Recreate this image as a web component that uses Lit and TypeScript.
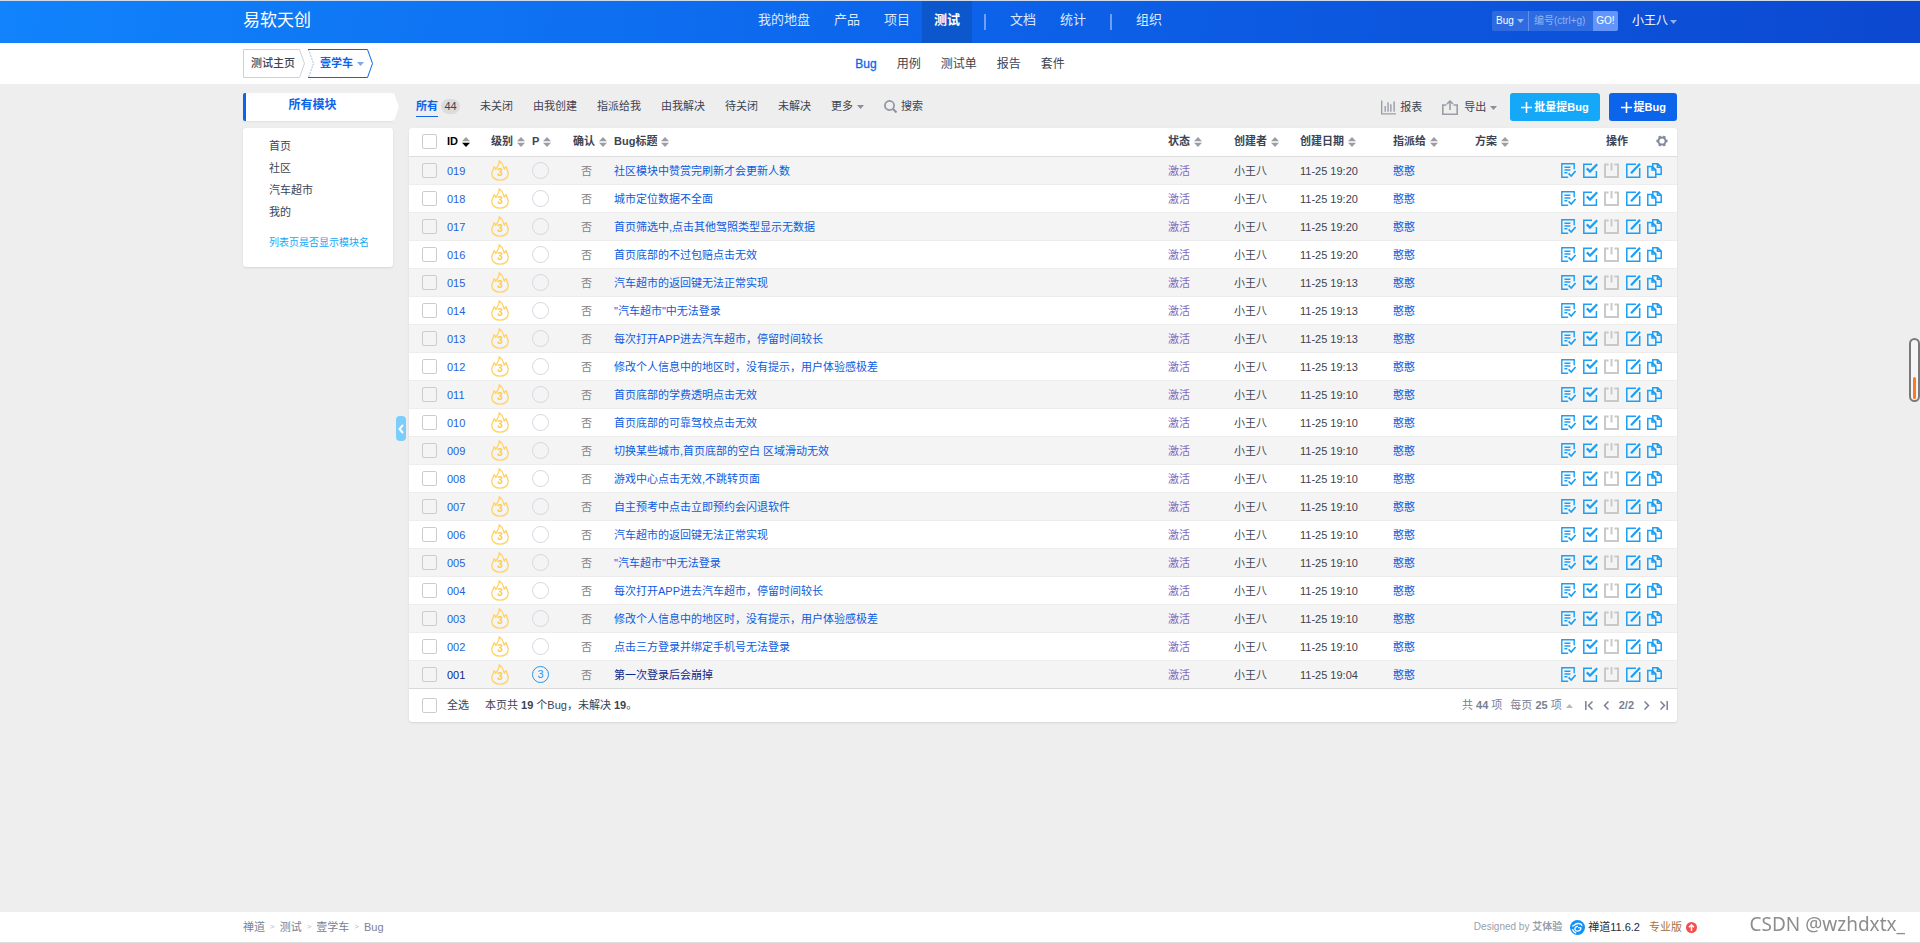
import { LitElement, html, css, svg } from "lit";
import { customElement } from "lit/decorators.js";
import { classMap } from "lit/directives/class-map.js";

interface Bug {
  id: string;
  title: string;
  time: string;
  priority?: string;
}

const bugs: Bug[] = [
  { id: "019", title: "社区模块中赞赏完刷新才会更新人数", time: "11-25 19:20" },
  { id: "018", title: "城市定位数据不全面", time: "11-25 19:20" },
  { id: "017", title: "首页筛选中,点击其他驾照类型显示无数据", time: "11-25 19:20" },
  { id: "016", title: "首页底部的不过包赔点击无效", time: "11-25 19:20" },
  { id: "015", title: "汽车超市的返回键无法正常实现", time: "11-25 19:13" },
  { id: "014", title: "\"汽车超市\"中无法登录", time: "11-25 19:13" },
  { id: "013", title: "每次打开APP进去汽车超市，停留时间较长", time: "11-25 19:13" },
  { id: "012", title: "修改个人信息中的地区时，没有提示，用户体验感极差", time: "11-25 19:13" },
  { id: "011", title: "首页底部的学费透明点击无效", time: "11-25 19:10" },
  { id: "010", title: "首页底部的可靠驾校点击无效", time: "11-25 19:10" },
  { id: "009", title: "切换某些城市,首页底部的空白 区域滑动无效", time: "11-25 19:10" },
  { id: "008", title: "游戏中心点击无效,不跳转页面", time: "11-25 19:10" },
  { id: "007", title: "自主预考中点击立即预约会闪退软件", time: "11-25 19:10" },
  { id: "006", title: "汽车超市的返回键无法正常实现", time: "11-25 19:10" },
  { id: "005", title: "\"汽车超市\"中无法登录", time: "11-25 19:10" },
  { id: "004", title: "每次打开APP进去汽车超市，停留时间较长", time: "11-25 19:10" },
  { id: "003", title: "修改个人信息中的地区时，没有提示，用户体验感极差", time: "11-25 19:10" },
  { id: "002", title: "点击三方登录并绑定手机号无法登录", time: "11-25 19:10" },
  { id: "001", title: "第一次登录后会崩掉", time: "11-25 19:04", priority: "3" },
];

const columns = ["级别", "P", "确认", "Bug标题", "状态", "创建者", "创建日期", "指派给", "方案"];

const sortMark = (down = false) => html`<svg class="sort" width="8" height="10" viewBox="0 0 8 10" aria-hidden="true">
    <path d="M4 0 8 4.300H0z" fill="#9a9da6" />
    <path d="M4 10 8 5.700H0z" fill=${down ? "#000" : "#9a9da6"} />
  </svg>`;

const caret = (up = false) => html`<svg class="caret" width="7" height="4" viewBox="0 0 7 4" aria-hidden="true">
    <path d=${up ? "M0 4h7L3.5 0z" : "M0 0h7L3.5 4z"} fill="currentColor" />
  </svg>`;

const icon = (label: string, body: unknown, off = false) => html`
  <button class=${classMap({ act: true, off })} title=${label} aria-label=${label} ?disabled=${off}>
    <svg width="15" height="15" viewBox="0 0 15 15" fill="none" stroke="currentColor" stroke-width="1.5">${body}</svg>
  </button>`;

const actionIcons = () => [
  icon("确认", svg`<path d="M13.2 6.2V.8H.8v13.4h6.4M3.4 4.2h6M3.4 7h6M3.4 9.8h3" stroke-width="1.4" /><path d="m7.600 10.400 2.600 2.600L14.600 8" stroke-width="1.700" />`),
  icon("解决", svg`<path d="M9 1.3H.8v12.9h12.6V8" /><path d="M3.800 5.4 7 8.6 14.200 1.2" stroke-width="2.200" />`),
  icon("关闭", svg`<path d="M4.6 1.500H1v12.500h13V1.500h-3.6M7.5 0v7.6" stroke-width="2" />`, true),
  icon("编辑", svg`<path d="M10 1.3H.8v12.9h12.9V5" /><path d="M5 10.2 14 .8" stroke-width="2.2" />`),
  icon("复制", svg`<path d="M.8 3.6h4.6l3.4 3.2v7.4h-8zM5 3.6V7h3.8" /><path d="M5.8 3.4V.8h5l3.4 3.2v7.2H9M10.4.8v3.4h3.8" />`),
];

const flame = html`
  <svg class="flame" width="18" height="21" viewBox="0 0 18 21" role="img" aria-label="级别 3">
    <path
      d="M8.200.8C8.400 4 7.400 5.400 6 7.400 5.600 8.200 5 8.800 4.800 9.400 4.400 8.400 4 7.400 3 6.600 3.200 9 .8 10.200.8 13.400.8 17.600 4.400 20.200 9 20.200s8.200-2.600 8.200-6.800c0-2.400-1.600-3.800-2-6.800-1 .6-1.600 1.400-1.800 2.600-.8-1-1-1.800-1.200-3C11.800 4.400 10.400 2.400 8.200.8z"
      fill="none" stroke="#ffd166" stroke-width="1.300" stroke-linejoin="round" />
    <text x="9" y="16" text-anchor="middle" font-size="10" font-weight="700" fill="#fcc94a">3</text>
  </svg>`;

@customElement("app-root")
export class AppRoot extends LitElement {
  static styles = css`
    :host {
      display: flex;
      flex-direction: column;
      min-height: 100vh;
      background: #eee;
      color: #3c4353;
      font: 11px/16px "Liberation Sans", "Noto Sans CJK SC", sans-serif;
    }
    * { box-sizing: border-box; }
    a { color: inherit; text-decoration: none; white-space: nowrap; }
    button, input, select { font: inherit; color: inherit; }
    button { background: none; border: 0; padding: 0; cursor: pointer; white-space: nowrap; }
    svg { flex: none; }
    .wrap {
      width: 100%;
      max-width: 1474px;
      margin: 0 auto;
      padding: 0 20px;
    }
    .caret { margin-left: 4px; vertical-align: middle; opacity: .55; }

    .top { border-top: 1px solid #cfdbe8; background: linear-gradient(100deg, #1183fb 0%, #0c63ea 50%, #0c48d0 100%); color: #fff; }
    .top .wrap, .sub .wrap { display: grid; grid-template-columns: 1fr auto 1fr; align-items: center; }
    .top .wrap { height: 42px; }
    .brand { font-size: 17px; line-height: 24px; margin: 0; font-weight: 400; padding-bottom: 2px; }
    .mainnav { display: flex; align-items: center; font-size: 13px; }
    .mainnav a { padding: 0 12px 4px; line-height: 38px; color: #dce9ff; }
    .mainnav a.on { background: #0c57cc; color: #fff; font-weight: 700; }
    .bar { width: 2px; height: 16px; margin: 0 12px; background: #6fa0f4; }
    .user { display: flex; justify-content: flex-end; align-items: center; padding-bottom: 2px; }
    .quick { display: flex; align-items: stretch; height: 20px; border-radius: 2px; overflow: hidden; font-size: 10px; background: #2e6be0; }
    .pick { display: flex; align-items: center; padding-right: 4px; border-right: 1px solid #5f90ee; }
    .pick select { appearance: none; background: none; border: 0; padding: 0 0 0 4px; width: 25px; height: 20px; line-height: 20px; outline: 0; }
    .pick .caret { margin-left: 0; }
    .quick input { width: 64px; border: 0; background: none; padding: 0 5px; outline: 0; }
    .quick input::placeholder { color: #8fb3f4; opacity: 1; }
    .go { width: 25px; background: #6495fb; color: #fff; }
    .me { font-size: 12px; margin-left: 14px; }
    .me .caret { margin-left: 2px; }

    .sub { background: #fff; }
    .sub .wrap { height: 41px; }
    .path { display: flex; gap: 2px; }
    .crumb { position: relative; height: 29px; line-height: 28px; padding: 0 11px 0 8px; font-weight: 500; }
    .crumb svg.edge { position: absolute; left: 0; top: 0; }
    .crumb.current { color: #0c64eb; font-weight: 700; padding: 0 11px 0 12px; }
    .subnav { display: flex; gap: 20px; font-size: 12px; }
    .subnav .on { color: #0c64eb; -webkit-text-stroke: .3px #0c64eb; }

    .main { flex: 1; padding-top: 9px; }
    .main .wrap { display: grid; grid-template-columns: 150px minmax(0, 1fr); column-gap: 16px; }
    .side { position: relative; }
    .sidehead { position: relative; height: 28px; margin: 0 0 7px; background: #fff; border-left: 3px solid #0c64eb; border-radius: 2px; font-size: 12px; line-height: 25px; font-weight: 700; color: #0c64eb; text-align: center; padding-right: 14px; box-shadow: 0 1px 1px #e0e0e0; }
    .sidehead svg { position: absolute; left: 147px; top: 0; }
    .tree { background: #fff; border-radius: 3px; padding: 7px 26px 14px; box-shadow: 0 1px 2px #d5d5d5; }
    .tree ul { list-style: none; margin: 0; padding: 0; }
    .tree li { line-height: 22px; }
    .tree .show { display: block; margin-top: 10px; font-size: 10px; line-height: 20px; color: #16a8f8; }
    .fold { position: absolute; left: 153px; top: 323px; width: 10px; height: 25px; border-radius: 4px; background: #7bcdfb; display: grid; place-items: center; }

    .tools { display: flex; align-items: center; height: 28px; margin-bottom: 7px; padding-left: 7px; }
    .filters { display: flex; align-items: center; gap: 20px; flex: 1; padding-bottom: 2px; }
    .filters .all { display: flex; align-items: center; gap: 3px; color: #0c64eb; font-weight: 700; }
    .filters .all span { line-height: 20px; border-bottom: 1px solid #0c64eb; }
    .filters .all .badge { background: #dcdcdc; color: #3c4353; border-radius: 8px; width: 19px; line-height: 15px; font-weight: 400; text-align: center; border: 0; }
    .withicon { display: flex; align-items: center; gap: 4px; }
    .right { display: flex; align-items: center; }
    .right .export { gap: 6px; margin: 0 13px 0 20px; }
    .primary { display: flex; align-items: center; gap: 2px; height: 28px; border-radius: 3px; color: #fff; font-weight: 700; background: #0c64eb; padding: 0 11px 0 12px; }
    .batch { background: #16a8f8; margin-right: 9px; padding: 0 11px; }

    .card { background: #fff; border-radius: 3px; box-shadow: 0 1px 2px #d5d5d5; }
    table { width: 100%; table-layout: fixed; border-collapse: separate; border-spacing: 0; }
    th, td { padding: 0; text-align: left; white-space: nowrap; overflow: hidden; }
    th { height: 29px; border-bottom: 1px solid #ddd; line-height: 24px; padding-bottom: 2px; font-weight: 700; }
    td { height: 28px; border-bottom: 1px solid #ededed; line-height: 26px; }
    tbody tr:nth-child(odd) { background: #f4f4f4; }
    tbody tr:last-child td { border-color: #d8d8d8; }
    .c-id { width: 82px; } .c-s { width: 41px; } .c-status { width: 66px; }
    .c-date { width: 93px; } .c-assigned { width: 82px; } .c-plan { width: 86px; } .c-act { width: 116px; }
    .pickrow { display: flex; align-items: center; gap: 10px; padding-left: 13px; }
    .tick { appearance: none; flex: none; margin: 0; width: 15px; height: 15px; border: 1px solid #ccc; border-radius: 2px; background: transparent; }
    .pickrow.idhead { color: #000; }
    .sort { margin-left: 4px; vertical-align: middle; }
    td a { color: #0c5be0; }
    td a.num { color: #2462dc; }
    tr.seen a.seenable { color: #0c2a8c; }
    .flame, .pri { display: block; }
    .pri { width: 17px; height: 17px; border: 1px solid #d5d8e2; border-radius: 50%; line-height: 15px; text-align: center; }
    .pri.set { border-color: #2196f3; color: #2196f3; }
    .conf { padding-left: 8px; color: #838383; }
    .status { color: #8666b8; }
    .acts { display: flex; justify-content: space-between; padding: 0 15px 1px 0; }
    .act { color: #1a9ff7; width: 15px; height: 15px; display: block; }
    .act.off { color: #c9c9c9; cursor: default; }
    .act svg { display: block; }
    .acthead { display: flex; justify-content: flex-end; align-items: center; gap: 28px; padding-right: 9px; }
    .acthead button { display: grid; color: #838a9d; }
    .foot { display: flex; align-items: center; height: 33px; padding: 0 9px 1px 13px; }
    .foot label { display: flex; align-items: center; gap: 10px; margin-right: 16px; }
    .foot p { margin: 0; flex: 1; }
    .pager { display: flex; align-items: center; color: #7a8093; }
    .pager .per { margin: 0 12px 0 8px; }
    .pager .steps { display: flex; align-items: center; gap: 10px; }
    .pager .steps button { display: grid; }

    .bottom { background: #fff; border-bottom: 1px solid #ddd; color: #7a8193; }
    .bottom .wrap { display: flex; align-items: center; justify-content: space-between; height: 30px; padding-right: 0; }
    .trail { display: flex; gap: 5px; }
    .trail i { font-style: normal; font-size: 8px; color: #b8bcc8; }
    .credit { display: flex; align-items: center; }
    .by { font-size: 10px; color: #9a9fac; margin-right: 8px; }
    .ver { color: #222a40; margin: 0 9px 0 3px; }
    .pro { color: #a8703f; margin-right: 4px; }
    .mark { position: fixed; right: 15px; bottom: 6px; font: 19px/26px "Noto Sans", sans-serif; color: #8d8d8d; }
    .gauge { position: fixed; right: 0; top: 338px; width: 11px; height: 64px; border: 2px solid #7a7a7a; border-radius: 6px; background: #f6f6f6; display: flex; align-items: flex-end; justify-content: center; padding-bottom: 1px; }
    .gauge span { width: 3px; height: 22px; border-radius: 2px; background: #fb7a22; }
  `;

  private renderTop() {
    return html`
      <header class="top">
        <div class="wrap">
          <h1 class="brand">易软天创</h1>
          <nav class="mainnav" aria-label="主导航">
            <a href="#">我的地盘</a><a href="#">产品</a><a href="#">项目</a><a href="#" class="on">测试</a>
            <span class="bar"></span>
            <a href="#">文档</a><a href="#">统计</a>
            <span class="bar"></span>
            <a href="#">组织</a>
          </nav>
          <div class="user">
            <form class="quick" @submit=${(e: Event) => e.preventDefault()}>
              <span class="pick"><select aria-label="类型"><option>Bug</option></select>${caret()}</span>
              <input type="text" aria-label="编号" placeholder="编号(ctrl+g)" />
              <button class="go">GO!</button>
            </form>
            <a class="me" href="#">小王八${caret()}</a>
          </div>
        </div>
      </header>
      <div class="sub">
        <div class="wrap">
          <div class="path">
            <a class="crumb" href="#">
              <svg class="edge" width="63" height="29" viewBox="0 0 63 29" fill="none" stroke="#cbd0db"><path d="M.5.5h56l5 14-5 14H.5z" /></svg>测试主页
            </a>
            <a class="crumb current" href="#">
              <svg class="edge" width="66" height="29" viewBox="0 0 66 29" fill="none" stroke="#0c64eb">
                <path d="M0 .5h59.500l5 14-5 14H0" /><path d="M.5.5l5 14-5 14" stroke-dasharray="2 1" opacity=".4" />
              </svg>壹学车${caret()}
            </a>
          </div>
          <nav class="subnav" aria-label="测试">
            <a href="#" class="on">Bug</a><a href="#">用例</a><a href="#">测试单</a><a href="#">报告</a><a href="#">套件</a>
          </nav>
        </div>
      </div>`;
  }

  private renderSide() {
    return html`
      <aside class="side">
        <h2 class="sidehead">所有模块<svg width="6" height="28" viewBox="0 0 6 28" aria-hidden="true"><path d="M0 0h1l5 14-5 14H0z" fill="#fff" /></svg></h2>
        <div class="tree">
          <ul>
            ${["首页", "社区", "汽车超市", "我的"].map((m) => html`<li><a href="#">${m}</a></li>`)}
          </ul>
          <a class="show" href="#">列表页是否显示模块名</a>
        </div>
        <button class="fold" aria-label="收起">
          <svg width="6" height="10" viewBox="0 0 6 10" fill="none" stroke="#fff" stroke-width="2"><path d="M5 1 1.500 5 5 9" /></svg>
        </button>
      </aside>`;
  }

  private renderTools() {
    const plus = html`<svg width="11" height="11" viewBox="0 0 11 11" stroke="#fff" stroke-width="1.600"><path d="M5.500 0v11M0 5.500h11" /></svg>`;
    return html`
      <div class="tools">
        <nav class="filters" aria-label="筛选">
          <a class="all" href="#"><span>所有</span><b class="badge">44</b></a>
          ${["未关闭", "由我创建", "指派给我", "由我解决", "待关闭", "未解决"].map((f) => html`<a href="#">${f}</a>`)}
          <a href="#">更多${caret()}</a>
          <a class="withicon" href="#">
            <svg width="13" height="13" viewBox="0 0 13 13" fill="none" stroke="#9094a0" stroke-width="1.700"><circle cx="5.500" cy="5.500" r="4.600" /><path d="m9 9 3.500 3.500" stroke-width="2" /></svg>搜索
          </a>
        </nav>
        <div class="right">
          <a class="withicon" href="#">
            <svg width="15" height="15" viewBox="0 0 16 15" fill="none" stroke="#9a9da6" stroke-width="1.500"><path d="M.7 0v14.300H16M4.500 12V6M7.500 12V2M10.500 12V4M14 12V1" /></svg>报表
          </a>
          <a class="withicon export" href="#">
            <svg width="16" height="15" viewBox="0 0 16 15" fill="none" stroke="#9a9da6" stroke-width="1.600"><path d="M4.500 5H.8v9.200h14.400V5h-3.700M8 10V1.200M5 4l3-3 3 3" /></svg><span>导出${caret()}</span>
          </a>
          <button class="primary batch">${plus}批量提Bug</button>
          <button class="primary">${plus}提Bug</button>
        </div>
      </div>`;
  }

  private renderRow(bug: Bug) {
    return html`
      <tr class=${classMap({ seen: !!bug.priority })}>
        <td>
          <div class="pickrow">
            <input class="tick" type="checkbox" aria-label=${`选择 ${bug.id}`} />
            <a class="num seenable" href="#">${bug.id}</a>
          </div>
        </td>
        <td>${flame}</td>
        <td><span class=${classMap({ pri: true, set: !!bug.priority })}>${bug.priority ?? ""}</span></td>
        <td class="conf">否</td>
        <td><a class="seenable" href="#">${bug.title}</a></td>
        <td class="status">激活</td>
        <td>小王八</td>
        <td>${bug.time}</td>
        <td><a href="#">憨憨</a></td>
        <td></td>
        <td><div class="acts">${actionIcons()}</div></td>
      </tr>`;
  }

  private renderPager() {
    const step = (label: string, w: number, d: string) => html`
      <button aria-label=${label}><svg width=${w} height="9" viewBox="0 0 ${w} 9" fill="none" stroke="currentColor" stroke-width="1.500"><path d=${d} /></svg></button>`;
    return html`
      <div class="pager">
        <span>共 <b>44</b> 项</span>
        <button class="per">每页 <b>25</b> 项${caret(true)}</button>
        <div class="steps">
          ${step("第一页", 8, "M.8 0v9M7.500.5l-4 4 4 4")}
          ${step("上一页", 6, "M5.500.5l-4 4 4 4")}
          <b>2/2</b>
          ${step("下一页", 6, "M.5.5l4 4-4 4")}
          ${step("最后一页", 8, "M.5.5l4 4-4 4M7.200 0v9")}
        </div>
      </div>`;
  }

  render() {
    return html`
      ${this.renderTop()}
      <main class="main">
        <div class="wrap">
          ${this.renderSide()}
          <section>
            ${this.renderTools()}
            <div class="card">
              <table>
                <colgroup>
                  <col class="c-id" /><col class="c-s" /><col class="c-s" /><col class="c-s" /><col />
                  <col class="c-status" /><col class="c-status" /><col class="c-date" />
                  <col class="c-assigned" /><col class="c-plan" /><col class="c-act" />
                </colgroup>
                <thead>
                  <tr>
                    <th>
                      <div class="pickrow idhead">
                        <input class="tick" type="checkbox" aria-label="全选" /><span>ID${sortMark(true)}</span>
                      </div>
                    </th>
                    ${columns.map((label) => html`<th>${label}${sortMark()}</th>`)}
                    <th>
                      <div class="acthead">
                        操作
                        <button aria-label="自定义列">
                          <svg width="12" height="12" viewBox="0 0 12 12" fill="none" stroke="currentColor">
                            <circle cx="6" cy="6" r="3.600" stroke-width="2" />
                            <path d="M.4 6h1.800M9.800 6h1.800M3.200 1.150l.9 1.560M7.900 9.290l.9 1.560M8.800 1.150l-.9 1.560M4.100 9.290l-.9 1.560" stroke-width="2.600" />
                          </svg>
                        </button>
                      </div>
                    </th>
                  </tr>
                </thead>
                <tbody>${bugs.map((b) => this.renderRow(b))}</tbody>
              </table>
              <div class="foot">
                <label><input class="tick" type="checkbox" />全选</label>
                <p>本页共 <b>19</b> 个Bug，未解决 <b>19</b>。</p>
                ${this.renderPager()}
              </div>
            </div>
          </section>
        </div>
      </main>
      <footer class="bottom">
        <div class="wrap">
          <nav class="trail" aria-label="位置">
            <a href="#">禅道</a><i>&gt;</i><a href="#">测试</a><i>&gt;</i><a href="#">壹学车</a><i>&gt;</i><a href="#">Bug</a>
          </nav>
          <div class="credit">
            <span class="by">Designed by <b>艾体验</b></span>
            <svg width="15" height="15" viewBox="0 0 15 15" aria-hidden="true">
              <circle cx="7.500" cy="7.500" r="7.500" fill="#1391f5" />
              <path d="M2 5.800C4 6.800 4.500 3.800 7.500 3.500 10.500 3.300 12.200 4.600 11.800 6M11 7.700H8M11 7.600c0 2.200-1.600 3.800-3.700 3.600C5 11 4.200 8.800 5.600 7.200 6.200 6.500 7 6.200 8 6.300M2.500 9.200c.4 2 1.700 3.400 3.700 4" fill="none" stroke="#fff" stroke-width="1.300" />
            </svg>
            <a class="ver" href="#">禅道11.6.2</a>
            <a class="pro" href="#">专业版</a>
            <svg width="11" height="11" viewBox="0 0 11 11" aria-hidden="true">
              <circle cx="5.500" cy="5.500" r="5.500" fill="#fa4b4b" /><path d="M5.500 9V3M3 5.300l2.500-2.500L8 5.300" fill="none" stroke="#fff" stroke-width="1.500" />
            </svg>
          </div>
        </div>
      </footer>
      <div class="mark">CSDN @wzhdxtx_</div>
      <div class="gauge"><span></span></div>
    `;
  }
}
